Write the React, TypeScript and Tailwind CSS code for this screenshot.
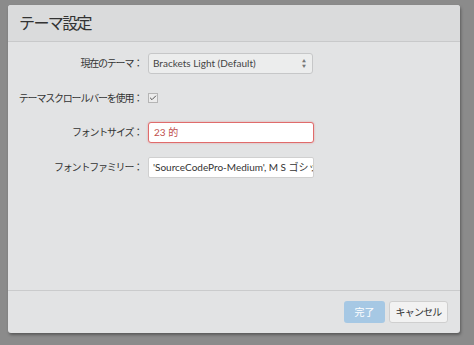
import { Check } from 'lucide-react';

const font = { fontFamily: 'Lato, "Noto Sans CJK JP", sans-serif' };

function Row({ label, children }: { label: string; children: React.ReactNode }) {
  return (
    <div className="flex items-center h-[21px]">
      <label className="w-[126px] text-right text-[10px] tracking-[-1.2px] text-[#333] whitespace-nowrap">{label}</label>
      <div className="ml-[6px] flex items-center">{children}</div>
    </div>
  );
}

function App() {
  return (
    <div className="w-[474px] h-[345px] bg-[#8b8b8b] pt-[5px] pl-[8px]" style={font}>
      <div className="w-[452px] h-[328px] bg-[#e2e3e4] rounded-[3px] shadow-[1px_2px_3px_rgba(0,0,0,0.35)] flex flex-col overflow-hidden">
        <div className="h-[37px] bg-[#dadbdc] border-b border-[#c8c9ca] flex items-center pl-[11px]">
          <h1 className="text-[16px] tracking-[-1.6px] text-[#333] leading-none">テーマ設定</h1>
        </div>

        <div className="flex-1 pt-[11px] pl-[8px] flex flex-col gap-[13.5px]">
          <Row label="現在のテーマ：">
            <div className="w-[165px] h-[21px] rounded-[3px] border border-[#c6c7c8] bg-[#eceded] flex items-center justify-between pl-[4px] pr-[6px] text-[10px] text-[#444]">
              <span>Brackets Light (Default)</span>
              <span className="flex flex-col text-[4px] leading-[5px] text-[#777]">
                <span>▲</span>
                <span>▼</span>
              </span>
            </div>
          </Row>
          <Row label="テーマスクロールバーを使用：">
            <div className="w-[10px] h-[10px] border border-[#b5b5b5] bg-[#ececec] flex items-center justify-center">
              <Check size={10} strokeWidth={2.5} className="text-[#333]" />
            </div>
          </Row>
          <Row label="フォントサイズ：">
            <div className="w-[166px] h-[21px] rounded-[3px] border border-[#e06b6b] bg-white flex items-center pl-[5px] text-[10px] text-[#c0504d] shadow-[0_0_2px_rgba(224,107,107,0.6)]">
              23 的
            </div>
          </Row>
          <Row label="フォントファミリー：">
            <div className="w-[166px] h-[21px] rounded-[2px] border border-[#d0d0d0] bg-white flex items-center pl-[4px] text-[10px] text-[#333] whitespace-nowrap overflow-hidden">
              'SourceCodePro-Medium', M S ゴシック
            </div>
          </Row>
        </div>

        <div className="h-[43px] border-t border-[#cacbcc] flex items-center justify-end gap-[4px] pr-[12px]">
          <button className="w-[41px] h-[22px] rounded-[3px] bg-[#a6c8e4] text-white text-[10px]">完了</button>
          <button className="w-[59px] h-[22px] rounded-[3px] bg-[#f2f2f2] border border-[#cfcfcf] text-[#333] text-[10px] tracking-[-0.8px]">キャンセル</button>
        </div>
      </div>
    </div>
  );
}

export default App;
